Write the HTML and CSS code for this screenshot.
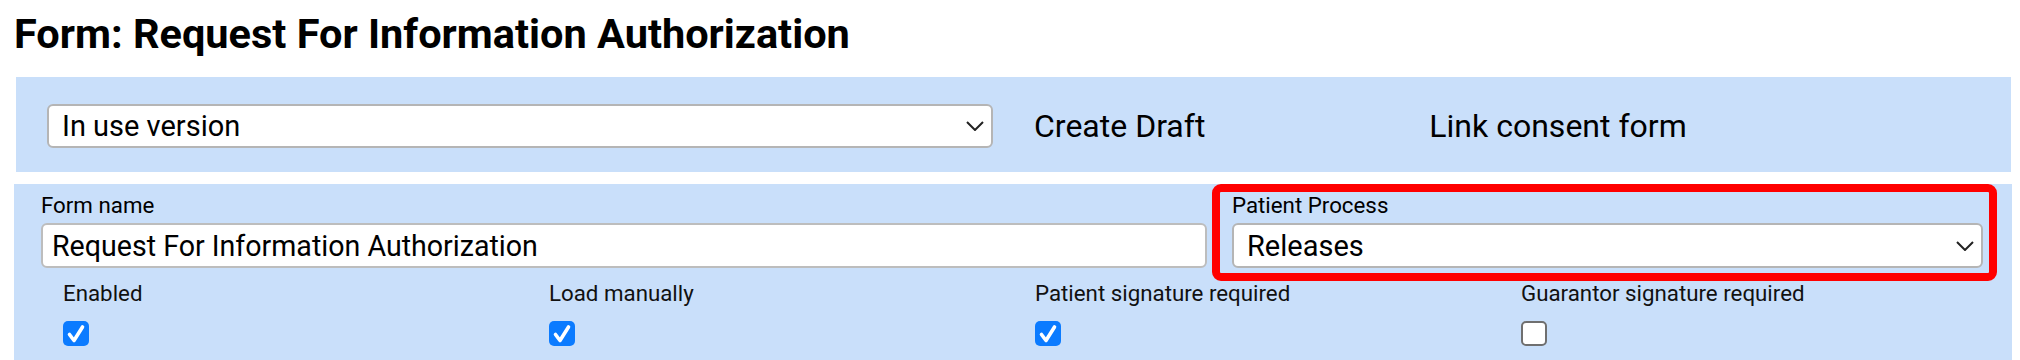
FILE: index.html
```html
<!DOCTYPE html>
<html>
<head>
<meta charset="utf-8">
<link rel="stylesheet" href="styles.css">
</head>
<body>
<h1 class="title">Form: Request For Information Authorization</h1>
<div class="panel version-panel">
  <div class="select version-select">
    <span class="select-text">In use version</span>
    <svg class="chevron" width="18" height="10" viewBox="0 0 18 10"><polyline points="1,1 9,9 17,1" fill="none" stroke="#222" stroke-width="2"/></svg>
  </div>
  <div class="actions">
    <span class="action">Create Draft</span>
    <span class="action">Link consent form</span>
  </div>
</div>
<div class="panel form-panel">
  <div class="field-row">
    <div class="field name-field">
      <label class="field-label">Form name</label>
      <div class="text-input">Request For Information Authorization</div>
    </div>
    <div class="highlight">
      <div class="field process-field">
        <label class="field-label">Patient Process</label>
        <div class="select process-select">
          <span class="select-text">Releases</span>
          <svg class="chevron" width="18" height="10" viewBox="0 0 18 10"><polyline points="1,1 9,9 17,1" fill="none" stroke="#222" stroke-width="2"/></svg>
        </div>
      </div>
    </div>
  </div>
  <div class="check-row">
    <div class="check-item">
      <div class="check-label">Enabled</div>
      <span class="checkbox checked"><svg width="26" height="25" viewBox="0 0 26 25"><polyline points="6.5,13.5 11,19.5 19.5,6" fill="none" stroke="#fff" stroke-width="3.6" stroke-linecap="round" stroke-linejoin="round"/></svg></span>
    </div>
    <div class="check-item">
      <div class="check-label">Load manually</div>
      <span class="checkbox checked"><svg width="26" height="25" viewBox="0 0 26 25"><polyline points="6.5,13.5 11,19.5 19.5,6" fill="none" stroke="#fff" stroke-width="3.6" stroke-linecap="round" stroke-linejoin="round"/></svg></span>
    </div>
    <div class="check-item">
      <div class="check-label">Patient signature required</div>
      <span class="checkbox checked"><svg width="26" height="25" viewBox="0 0 26 25"><polyline points="6.5,13.5 11,19.5 19.5,6" fill="none" stroke="#fff" stroke-width="3.6" stroke-linecap="round" stroke-linejoin="round"/></svg></span>
    </div>
    <div class="check-item">
      <div class="check-label">Guarantor signature required</div>
      <span class="checkbox"></span>
    </div>
  </div>
</div>
</body>
</html>
```
FILE: styles.css
```css
html, body {
  margin: 0;
  padding: 0;
  background: #fff;
  font-family: Roboto, "Liberation Sans", Arial, sans-serif;
  color: #000;
}
.title {
  margin: 10px 0 19px 14px;
  font-size: 41.5px;
  font-weight: 700;
  line-height: 48px;
}
.panel {
  background: #c9dffa;
}
.version-panel {
  margin-left: 16px;
  width: 1995px;
  box-sizing: border-box;
  padding: 27px 0 24px 31px;
  display: flex;
  align-items: center;
}
.select {
  box-sizing: border-box;
  height: 44px;
  background: #fff;
  border: 2px solid #b5b5b5;
  border-radius: 6px;
  display: flex;
  align-items: center;
  justify-content: space-between;
  padding: 0 7px 0 13px;
  font-size: 29px;
  color: #000;
}
.version-select {
  width: 946px;
}
.chevron {
  display: block;
}
.actions {
  display: flex;
  margin-left: 41px;
  gap: 224px;
  font-size: 32px;
}
.form-panel {
  margin-top: 12px;
  margin-left: 14px;
  width: 1998px;
  height: 176px;
  box-sizing: border-box;
}
.field-row {
  display: flex;
  align-items: flex-start;
  padding-left: 27px;
}
.field {
  display: flex;
  flex-direction: column;
}
.name-field {
  width: 1166px;
  padding-top: 9px;
}
.field-label {
  font-size: 22.3px;
  line-height: 25px;
  margin-bottom: 5px;
  color: #000;
}
.text-input {
  box-sizing: border-box;
  height: 45px;
  background: #fff;
  border: 2px solid #bdbdbd;
  border-radius: 6px;
  display: flex;
  align-items: center;
  padding-left: 9px;
  font-size: 28.6px;
}
.highlight {
  margin-left: 5px;
  width: 785px;
  box-sizing: border-box;
  border: 8px solid #ff0000;
  border-radius: 9px;
  padding: 1px 6px 5px 12px;
}
.process-select {
  height: 45px;
  width: 751px;
}
.check-row {
  display: grid;
  grid-template-columns: repeat(4, 486px);
  padding-left: 49px;
}
.check-item {
  display: flex;
  flex-direction: column;
  align-items: flex-start;
}
.check-label {
  font-size: 22.3px;
  line-height: 25px;
  margin-bottom: 15px;
  color: #111;
}
.checkbox {
  box-sizing: border-box;
  width: 26px;
  height: 25px;
  border-radius: 5px;
  background: #fff;
  border: 2.5px solid #6f6f6f;
  display: block;
}
.checkbox.checked {
  background: #0b7bff;
  border: none;
}
.checkbox svg {
  display: block;
}
```
